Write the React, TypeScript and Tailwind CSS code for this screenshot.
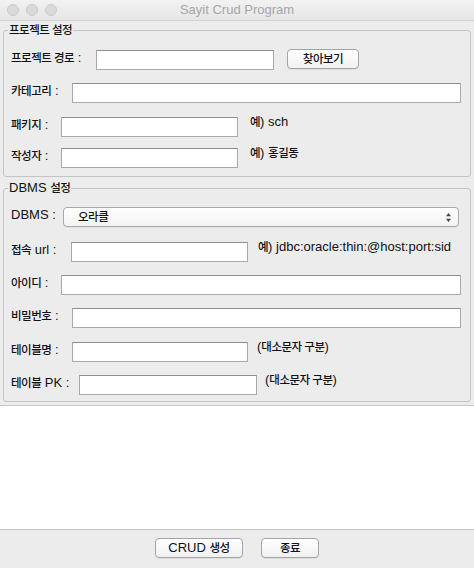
import React from "react";

const K = ({ children }: { children: React.ReactNode }) => (
  <span className="text-[11.5px] tracking-[-0.5px] font-medium">{children}</span>
);

const Field = ({ w }: { w: string }) => (
  <input
    type="text"
    readOnly
    className={`${w} h-[20px] shrink-0 bg-white border border-[#a9a9a9] border-t-[#8e8e8e] outline-none`}
  />
);

const Row = ({ children, mt }: { children: React.ReactNode; mt: string }) => (
  <div className={`flex items-start h-[20px] ${mt}`}>{children}</div>
);

const Label = ({ w, children }: { w: string; children: React.ReactNode }) => (
  <div className={`${w} shrink-0 leading-[16px] text-[#111111]`}>{children}</div>
);

const Hint = ({ ml, children }: { ml: string; children: React.ReactNode }) => (
  <div className={`${ml} -mt-[3px] leading-[16px] whitespace-nowrap text-[#111111]`}>{children}</div>
);

const MacButton = ({ w, children }: { w: string; children: React.ReactNode }) => (
  <button
    className={`${w} h-[20px] rounded-[4px] border border-[#a4a4a4] bg-gradient-to-b from-[#ffffff] to-[#f1f1f1] shadow-[0_1px_0_rgba(0,0,0,0.06)] leading-[18px] text-[#111111] text-center`}
  >
    {children}
  </button>
);

export default function App() {
  return (
    <div className="w-[474px] h-[568px] flex flex-col bg-white text-[13px] font-['Liberation_Sans','Noto_Sans_CJK_KR',sans-serif] overflow-hidden">
      {/* Title bar */}
      <div className="h-[21px] shrink-0 grid grid-cols-[1fr_auto_1fr] items-center border-b border-[#d2d2d2] bg-gradient-to-b from-[#f2f2f2] to-[#e6e6e6]">
        <div className="flex items-center gap-[7px] pl-[7px]">
          <div className="w-[12px] h-[12px] rounded-full bg-[#dadada] border border-[#cacaca]" />
          <div className="w-[12px] h-[12px] rounded-full bg-[#dadada] border border-[#cacaca]" />
          <div className="w-[12px] h-[12px] rounded-full bg-[#dadada] border border-[#cacaca]" />
        </div>
        <div className="text-[#a6a6a6] leading-[16px]">Sayit Crud Program</div>
        <div />
      </div>

      {/* Main panel */}
      <div className="shrink-0 bg-[#ececec] border-b border-[#c8c8c8] px-[3px] pt-[1px] pb-[3px]">
        <fieldset className="h-[155px] border border-[#c4c4c4] rounded-[3px] pl-[7px] pr-0">
          <legend className="-ml-[3px] px-[1px] leading-[16px] text-[#111111]">
            <K>프로젝트 설정</K>
          </legend>
          <Row mt="mt-[12px]">
            <Label w="w-[85px]">
              <K>프로젝트 경로</K> :
            </Label>
            <Field w="w-[178px]" />
            <div className="ml-[13px] -mt-[1px]">
              <MacButton w="w-[72px]">
                <K>찾아보기</K>
              </MacButton>
            </div>
          </Row>
          <Row mt="mt-[13px]">
            <Label w="w-[61px]">
              <K>카테고리</K> :
            </Label>
            <Field w="w-[389px]" />
          </Row>
          <Row mt="mt-[14px]">
            <Label w="w-[50px]">
              <K>패키지</K> :
            </Label>
            <Field w="w-[177px]" />
            <Hint ml="ml-[12px]">
              <K>예</K>) sch
            </Hint>
          </Row>
          <Row mt="mt-[11px]">
            <Label w="w-[50px]">
              <K>작성자</K> :
            </Label>
            <Field w="w-[177px]" />
            <Hint ml="ml-[12px]">
              <K>예</K>) <K>홍길동</K>
            </Hint>
          </Row>
        </fieldset>

        <fieldset className="mt-[3px] h-[222px] border border-[#c4c4c4] rounded-[3px] pl-[7px] pr-0">
          <legend className="-ml-[3px] px-[1px] leading-[16px] text-[#111111]">
            DBMS <K>설정</K>
          </legend>
          <Row mt="mt-[11px]">
            <Label w="w-[52px]">DBMS :</Label>
            <div className="w-[396px] h-[20px] shrink-0 rounded-[4px] border border-[#a9a9a9] bg-gradient-to-b from-[#ffffff] to-[#f3f3f3] shadow-[0_1px_0_rgba(0,0,0,0.05)] flex items-center pl-[14px] pr-[6px]">
              <div className="flex-1 leading-[16px] text-[#111111]">
                <K>오라클</K>
              </div>
              <svg width="7" height="11" viewBox="0 0 7 11">
                <path d="M3.5 1 L6 4.2 L1 4.2 Z" fill="#444" />
                <path d="M3.5 10 L6 6.8 L1 6.8 Z" fill="#444" />
              </svg>
            </div>
          </Row>
          <Row mt="mt-[15px]">
            <Label w="w-[60px]">
              <K>접속</K> url :
            </Label>
            <Field w="w-[177px]" />
            <Hint ml="ml-[10px]">
              <K>예</K>) jdbc:oracle:thin:@host:port:sid
            </Hint>
          </Row>
          <Row mt="mt-[13px]">
            <Label w="w-[50px]">
              <K>아이디</K> :
            </Label>
            <Field w="w-[400px]" />
          </Row>
          <Row mt="mt-[13px]">
            <Label w="w-[61px]">
              <K>비밀번호</K> :
            </Label>
            <Field w="w-[389px]" />
          </Row>
          <Row mt="mt-[14px]">
            <Label w="w-[61px]">
              <K>테이블명</K> :
            </Label>
            <Field w="w-[176px]" />
            <Hint ml="ml-[9px]">
              (<K>대소문자 구분</K>)
            </Hint>
          </Row>
          <Row mt="mt-[13px]">
            <Label w="w-[68px]">
              <K>테이블</K> PK :
            </Label>
            <Field w="w-[178px]" />
            <Hint ml="ml-[8px]">
              (<K>대소문자 구분</K>)
            </Hint>
          </Row>
        </fieldset>
      </div>

      {/* White area */}
      <div className="flex-1 bg-white" />

      {/* Bottom bar */}
      <div className="h-[39px] shrink-0 border-t border-[#c8c8c8] bg-[#ececec] flex justify-center items-start pt-[8px] gap-[18px]">
        <MacButton w="w-[88px]">
          CRUD <K>생성</K>
        </MacButton>
        <MacButton w="w-[58px]">
          <K>종료</K>
        </MacButton>
      </div>
    </div>
  );
}
